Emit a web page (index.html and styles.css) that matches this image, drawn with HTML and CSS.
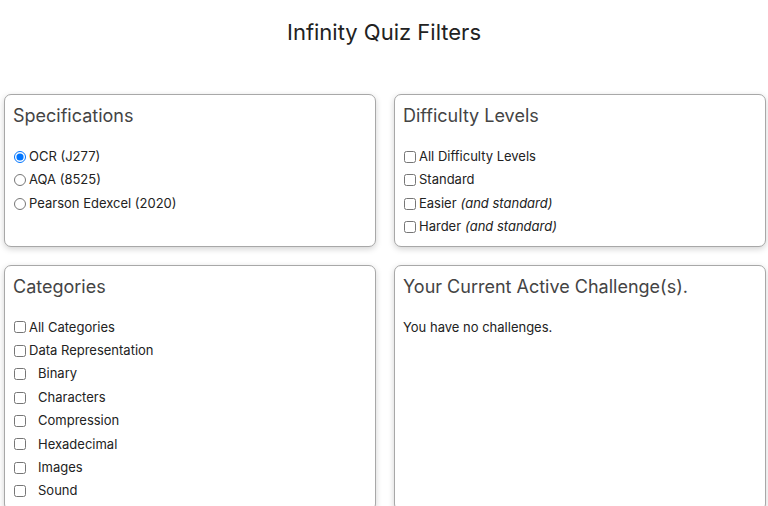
FILE: index.html
```html
<!DOCTYPE html>
<html>
<head>
<meta charset="utf-8">
<link rel="stylesheet" href="styles.css">
</head>
<body>
<h1 class="page-title">Infinity Quiz Filters</h1>
<div class="grid">
  <section class="card">
    <h2 class="card-title">Specifications</h2>
    <div class="opts">
      <label class="opt"><input type="radio" name="spec" checked>OCR (J277)</label>
      <label class="opt"><input type="radio" name="spec">AQA (8525)</label>
      <label class="opt"><input type="radio" name="spec">Pearson Edexcel (2020)</label>
    </div>
  </section>
  <section class="card">
    <h2 class="card-title">Difficulty Levels</h2>
    <div class="opts">
      <label class="opt"><input type="checkbox">All Difficulty Levels</label>
      <label class="opt"><input type="checkbox">Standard</label>
      <label class="opt"><input type="checkbox">Easier <em>(and standard)</em></label>
      <label class="opt"><input type="checkbox">Harder <em>(and standard)</em></label>
    </div>
  </section>
  <section class="card">
    <h2 class="card-title">Categories</h2>
    <div class="opts">
      <label class="opt"><input type="checkbox">All Categories</label>
      <label class="opt"><input type="checkbox">Data Representation</label>
      <label class="opt sub"><input type="checkbox">Binary</label>
      <label class="opt sub"><input type="checkbox">Characters</label>
      <label class="opt sub"><input type="checkbox">Compression</label>
      <label class="opt sub"><input type="checkbox">Hexadecimal</label>
      <label class="opt sub"><input type="checkbox">Images</label>
      <label class="opt sub"><input type="checkbox">Sound</label>
    </div>
  </section>
  <section class="card">
    <h2 class="card-title">Your Current Active Challenge(s).</h2>
    <p class="note">You have no challenges.</p>
  </section>
</div>
</body>
</html>
```
FILE: styles.css
```css
html, body {
  margin: 0;
  padding: 0;
  background: #fff;
}
body {
  font-family: "Inter", "Noto Sans", sans-serif;
  color: #222;
}
.page-title {
  margin: 0;
  padding-top: 18px;
  height: 94px;
  box-sizing: border-box;
  text-align: center;
  font-weight: 400;
  font-size: 22px;
  line-height: 28px;
  color: #222;
}
.grid {
  display: grid;
  grid-template-columns: 372px 372px;
  column-gap: 18px;
  row-gap: 18px;
  padding: 0 2px 0 4px;
}
.card {
  border: 1px solid #a8a8a8;
  border-radius: 7px;
  box-shadow: 0 2px 6px rgba(0,0,0,0.18);
  padding: 8px 8px 7px 8px;
  background: #fff;
}
.card-title {
  margin: 0 0 16px 0;
  font-size: 18px;
  line-height: 26px;
  font-weight: 400;
  color: #444;
}
.opts {
  display: flex;
  flex-direction: column;
}
.opt {
  display: flex;
  align-items: center;
  font-size: 13px;
  line-height: 23.4px;
  color: #222;
}
.opt input {
  margin: 0 3px 0 1px;
  width: 12px;
  height: 12px;
}
.opt.sub input {
  margin-right: 12px;
}
.opt em {
  margin-left: 4px;
  font-style: italic;
}
.note {
  margin: 0;
  font-size: 13px;
  line-height: 23.4px;
  color: #222;
}
```
